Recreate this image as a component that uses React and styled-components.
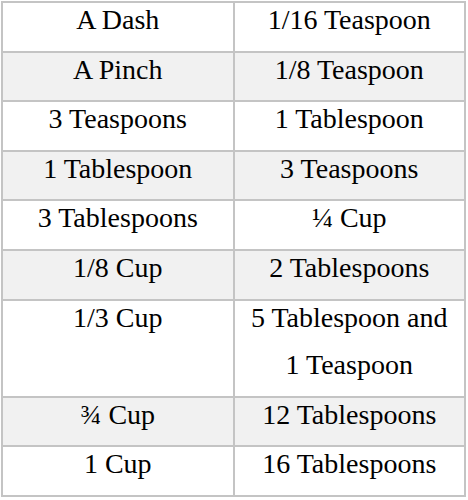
import React from 'react'
import styled, { createGlobalStyle } from 'styled-components'

const GlobalStyle = createGlobalStyle`
	html, body {
		margin: 0;
		padding: 0;
		background: #ffffff;
	}
	body {
		padding: 1px 0 0 1px;
		font-family: 'Liberation Serif', 'Times New Roman', serif;
	}
`

const Table = styled.table`
	width: 465px;
	border-collapse: collapse;
	table-layout: fixed;
	border: 2px solid #c4c4c4;
	color: #000000;
	font-family: 'Liberation Serif', 'Times New Roman', serif;
	font-size: 28px;
`

const Row = styled.tr`
	background-color: ${props => (props.$shaded ? '#f1f1f1' : '#ffffff')};
`

const Cell = styled.td`
	width: 50%;
	border: 2px solid #c4c4c4;
	padding: 0 11px;
	text-align: center;
	vertical-align: top;
	font-family: 'Liberation Serif', 'Times New Roman', serif;
	font-size: 28px;
	line-height: 47.6px;
`

const Text = styled.span`
	display: block;
	margin-top: -7px;
	margin-bottom: 7px;
`

const rows = [
	['A Dash', '1/16 Teaspoon'],
	['A Pinch', '1/8 Teaspoon'],
	['3 Teaspoons', '1 Tablespoon'],
	['1 Tablespoon', '3 Teaspoons'],
	['3 Tablespoons', '\u00BC Cup'],
	['1/8 Cup', '2 Tablespoons'],
	['1/3 Cup', '5 Tablespoon and 1 Teaspoon'],
	['\u00BE Cup', '12 Tablespoons'],
	['1 Cup', '16 Tablespoons']
]

export default function App() {
	return (
		<>
			<GlobalStyle />
			<Table>
				<tbody>
					{rows.map(([from, to], i) => (
						<Row key={from} $shaded={i % 2 === 1}>
							<Cell>
								<Text>{from}</Text>
							</Cell>
							<Cell>
								<Text>{to}</Text>
							</Cell>
						</Row>
					))}
				</tbody>
			</Table>
		</>
	)
}
